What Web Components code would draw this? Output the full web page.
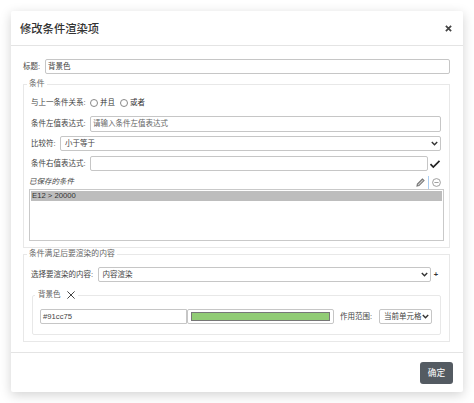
<!DOCTYPE html>
<html lang="zh"><head><meta charset="utf-8">
<style>
html,body{margin:0;background:#fff;width:474px;height:403px;overflow:hidden}
body{font:7.5px/12px "Liberation Sans","Noto Sans CJK SC",sans-serif;color:#333}
</style></head><body>
<x-modal heading="修改条件渲染项">
  <x-row label="标题:" pad="0">
    <x-field grow>背景色</x-field>
  </x-row>
  <x-group legend="条件" style="margin-top:5px">
    <x-row label="与上一条件关系:" style="margin-top:7px;height:14px;min-height:14px">
      <x-radio>并且</x-radio><x-radio>或者</x-radio>
    </x-row>
    <x-row label="条件左值表达式:" style="margin-top:6px"><x-field grow tall placeholder>请输入条件左值表达式</x-field></x-row>
    <x-row label="比较符:" style="margin-top:4px"><x-field grow select>小于等于</x-field></x-row>
    <x-row label="条件右值表达式:" style="margin-top:5px">
      <x-field grow></x-field>
      <svg width="12" height="10" viewBox="0 0 12 10" style="margin-left:1px;flex:none"><path d="M1.5 5.2 4.3 8 10.5 1.8" fill="none" stroke="#222" stroke-width="1.7"/></svg>
    </x-row>
    <x-saved style="margin-top:5px"></x-saved>
  </x-group>
  <x-group legend="条件满足后要渲染的内容" style="margin-top:1px">
    <x-row label="选择要渲染的内容:" style="margin-top:8px">
      <x-field grow select>内容渲染</x-field><span style="width:10px;text-align:center;font-weight:700;flex:none">+</span>
    </x-row>
    <x-color-group style="margin-top:8px"></x-color-group>
  </x-group>
</x-modal>
<script>
function def(name,css,html,init){
  customElements.define(name,class extends HTMLElement{
    constructor(){super();this.attachShadow({mode:"open"}).innerHTML="<style>"+css+"</style>"+html}
    connectedCallback(){init&&init.call(this,this.shadowRoot)}
  });
}
const chev='<svg width="7" height="5" viewBox="0 0 7 5"><path d="M.8 1 3.5 3.8 6.2 1" fill="none" stroke="#333" stroke-width="1.4"/></svg>';
def("x-modal",`
:host{display:flex;flex-direction:column;box-sizing:border-box;margin:11px 0 0 11px;width:452px;height:381px;background:#fff;box-shadow:0 3px 12px rgba(0,0,0,.18);border-radius:2px}
header{height:35px;box-sizing:border-box;border-bottom:1px solid #e4e4e4;display:flex;align-items:center;justify-content:space-between;padding:0 11px 0 9px}
h1{margin:0;font:500 11.3px/18px "Noto Sans CJK SC",sans-serif;color:#333}
main{flex:1;padding:13px 13px 0 12px;min-height:0}
footer{height:40px;box-sizing:border-box;border-top:1px solid #e4e4e4;display:flex;justify-content:flex-end;align-items:flex-start;padding:9px 10px 0 0}
button{width:33px;height:22px;border:0;border-radius:3px;background:#545b62;color:#fff;font:8.7px/22px "Noto Sans CJK SC",sans-serif;padding:0}
`,`<header><h1></h1><svg width="7" height="7" viewBox="0 0 8 8"><path d="M1 1 7 7M7 1 1 7" stroke="#444" stroke-width="2"/></svg></header><main><slot></slot></main><footer><button>确定</button></footer>`,
function(r){r.querySelector("h1").textContent=this.getAttribute("heading")});
def("x-row",`
:host{display:flex;align-items:center;min-height:15px;padding-left:2px}
:host([pad="0"]){padding-left:0}
label{flex:none;margin-right:4.5px;white-space:nowrap;color:#444}
:host([pad="0"]) label{margin-right:5px}
`,`<label></label><slot></slot>`,function(r){r.querySelector("label").textContent=this.getAttribute("label")});
def("x-field",`
:host{display:flex;align-items:center;box-sizing:border-box;height:15px;border:1px solid #c6c6c6;border-radius:2px;background:#fff;padding:0 2px;color:#444;white-space:nowrap;min-width:0}
:host([grow]){flex:1}
:host([tall]){height:16px}
:host([placeholder]){color:#666}
:host([select]){justify-content:space-between;padding:0 2px 0 4px}
`,`<span><slot></slot></span><span id="c"></span>`,function(r){if(this.hasAttribute("select"))r.getElementById("c").innerHTML=chev});
def("x-radio",`
:host{display:inline-flex;align-items:center;margin-right:5px;color:#333}
i{width:6px;height:6px;border:1px solid #888;border-radius:50%;margin-right:2px}
`,`<i></i><slot></slot>`);
def("x-group",`
:host{display:block}
fieldset{margin:0;padding:0 8px 6px 5px;border:1px solid #e8e8e8;min-width:0}
legend{font-size:7.8px;line-height:10px;padding:0 2px;margin-left:-2px;color:#666}
`,`<fieldset><legend></legend><slot></slot></fieldset>`,function(r){r.querySelector("legend").textContent=this.getAttribute("legend")});
def("x-saved",`
:host{display:block}
.h{display:flex;align-items:center;height:13px;font-style:italic;color:#444}
.h span{flex:1;margin-bottom:1px}
.bar{width:1.5px;height:13.5px;background:#a9cdf2;margin:0 3px;flex:none}
.list{box-sizing:border-box;height:52px;border:1px solid #c9c9c9;margin-right:-3px;padding:1px}
.sel{background:#bdbdbd;height:10px;line-height:10px;padding-left:1px;color:#333;font-size:7.7px;font-style:normal}
`,`<div class="h"><span>已保存的条件</span>
<svg width="9" height="9" viewBox="0 0 9 9"><path d="M1 8 1.4 6 6.4 1l1.6 1.6-5 5z" fill="#ccc" stroke="#777" stroke-width="1.1"/></svg>
<i class="bar"></i>
<svg width="9" height="9" viewBox="0 0 9 9"><circle cx="4.5" cy="4.5" r="3.9" fill="none" stroke="#888" stroke-width=".8"/><path d="M2.4 4.5h4.2" stroke="#888" stroke-width=".8"/></svg></div>
<div class="list"><div class="sel">E12 &gt; 20000</div></div>`);
def("x-color-group",`
:host{display:block;padding:0 0 0 3px}
fieldset{margin:0;padding:9px 8px 10px 7px;border:1px solid #e8e8e8;border-radius:2px;min-width:0}
legend{display:flex;align-items:center;font-size:7.5px;line-height:10px;padding:0 3px;margin-left:-5px;color:#666}
legend svg{margin-left:6px}
.r{display:flex;align-items:center;height:15px}
.t,.c{box-sizing:border-box;width:147px;height:15px;border:1px solid #c6c6c6;background:#fff;flex:none}
.t{padding:0 2px;line-height:13px;color:#444;border-radius:2px 0 0 2px;font-size:7.7px}
.c{padding:2px 3px;border-radius:2px}
.c i{display:block;height:100%;background:#91cc75;border:1px solid #777;box-sizing:border-box}
.l{margin-left:6px;color:#444;white-space:nowrap}
.s{box-sizing:border-box;display:flex;align-items:center;justify-content:space-between;width:53px;height:15px;border:1px solid #c6c6c6;border-radius:2px;padding:0 2px 0 4px;color:#444;white-space:nowrap;margin-left:auto;flex:none}
`,`<fieldset><legend>背景色<svg width="8" height="8" viewBox="0 0 8 8"><path d="M.4 .4 7.6 7.6M7.6 .4 .4 7.6" stroke="#444" stroke-width="1"/></svg></legend>
<div class="r"><div class="t">#91cc75</div><div class="c"><i></i></div><span class="l">作用范围:</span><div class="s"><span>当前单元格</span>${chev}</div></div></fieldset>`);
</script>
</body></html>
